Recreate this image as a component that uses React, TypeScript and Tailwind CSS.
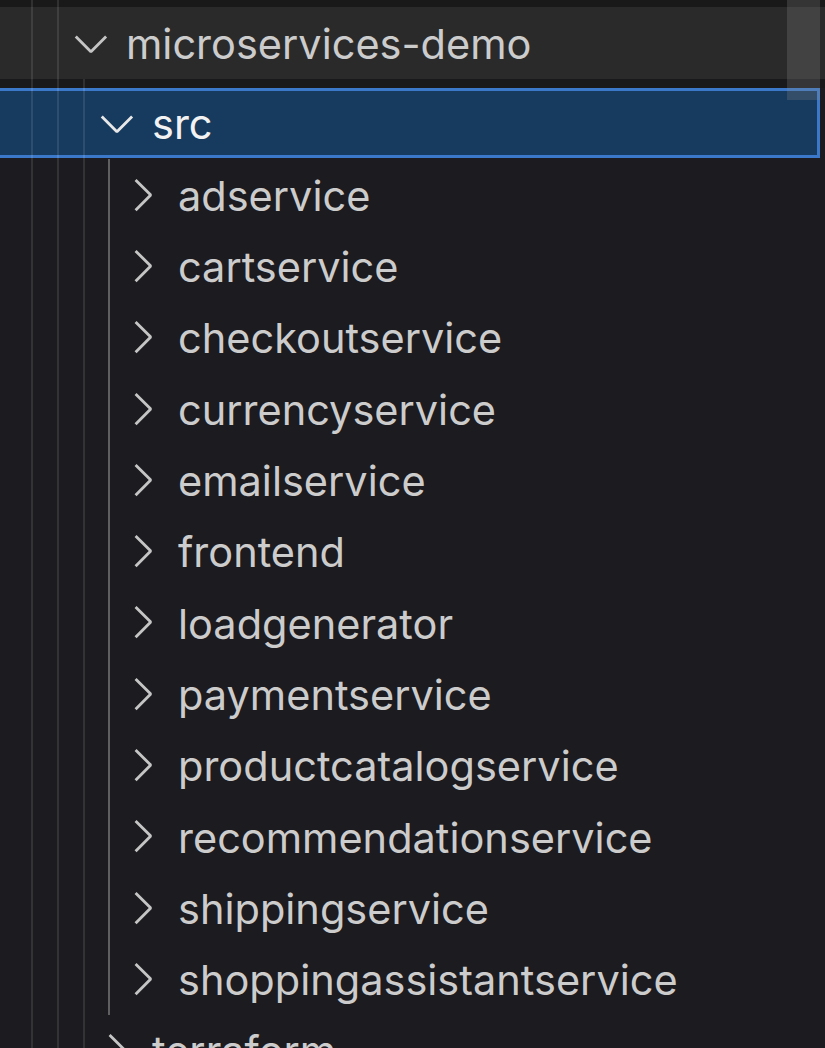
import React from "react";

const children = [
  "adservice",
  "cartservice",
  "checkoutservice",
  "currencyservice",
  "emailservice",
  "frontend",
  "loadgenerator",
  "paymentservice",
  "productcatalogservice",
  "recommendationservice",
  "shippingservice",
  "shoppingassistantservice",
];

const ChevronRight = () => (
  <svg viewBox="0 0 16 16" className="w-[52px] h-[52px] shrink-0 fill-[#c5c5c5]">
    <path d="M10.072 8.024L5.715 3.667l.618-.62L11 7.716v.618L6.333 13l-.618-.619 4.357-4.357z" />
  </svg>
);

const ChevronDown = ({ light }: { light?: boolean }) => (
  <svg
    viewBox="0 0 16 16"
    className={`w-[52px] h-[52px] shrink-0 ${light ? "fill-[#e8e8e8]" : "fill-[#c5c5c5]"}`}
  >
    <path d="M7.976 10.072l4.357-4.357.62.618L8.284 11h-.618L3 6.333l.619-.618 4.357 4.357z" />
  </svg>
);

const Guide = ({ x, top, bottom, color }: { x: number; top: number; bottom: number; color: string }) => (
  <div
    className={`absolute w-[2px] pointer-events-none ${color}`}
    style={{ left: x, top, height: bottom - top }}
  />
);

export default function App() {
  return (
    <div
      className="relative w-[825px] h-[1048px] overflow-hidden bg-[#1c1b1f] text-[#cccccc] text-[41.5px] leading-none"
      style={{ fontFamily: "Inter, 'Liberation Sans', sans-serif" }}
    >
      <div className="h-[7px] bg-[#19191a]" />

      {/* sticky root row */}
      <div className="h-[72px] bg-[#2a2a2b] flex items-center pl-[65px]">
        <ChevronDown />
        <span className="ml-[9px] pt-[4px]">microservices-demo</span>
      </div>
      <div className="h-[9px] bg-[#19191b]" />

      {/* selected row */}
      <div className="h-[70px] mr-[5px] bg-[#173a5f] border-y-[3px] border-r-[3px] border-[#3b78c9] flex items-center pl-[91px]">
        <ChevronDown light />
        <span className="ml-[9px] pt-[4px] text-[#f2f2f2]">src</span>
      </div>

      <div className="pt-[1px]">
        {children.map((name) => (
          <div key={name} className="h-[71.3px] flex items-center pl-[116px]">
            <ChevronRight />
            <span className="ml-[10px] pt-[4px]">{name}</span>
          </div>
        ))}
        <div className="h-[71.3px] flex items-center pl-[90px]">
          <ChevronRight />
          <span className="ml-[10px] pt-[4px]">terraform</span>
        </div>
      </div>

      {/* indent guides */}
      <Guide x={31} top={0} bottom={1048} color="bg-white/10" />
      <Guide x={57} top={0} bottom={1048} color="bg-white/10" />
      <Guide x={83} top={79} bottom={1048} color="bg-white/10" />
      <Guide x={108} top={159} bottom={1015} color="bg-[#5f5f62]" />

      {/* scrollbar thumb */}
      <div className="absolute top-0 left-[787px] w-[33px] h-[100px] bg-[#8c8c8c]/25" />
    </div>
  );
}
